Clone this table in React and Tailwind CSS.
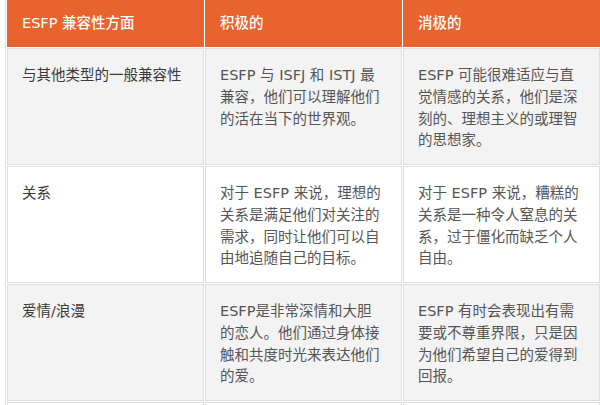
const rows = [
  {
    aspect: '与其他类型的一般兼容性',
    pos: 'ESFP 与 ISFJ 和 ISTJ 最兼容，他们可以理解他们的活在当下的世界观。',
    neg: 'ESFP 可能很难适应与直觉情感的关系，他们是深刻的、理想主义的或理智的思想家。',
  },
  {
    aspect: '关系',
    pos: '对于 ESFP 来说，理想的关系是满足他们对关注的需求，同时让他们可以自由地追随自己的目标。',
    neg: '对于 ESFP 来说，糟糕的关系是一种令人窒息的关系，过于僵化而缺乏个人自由。',
  },
  {
    aspect: '爱情/浪漫',
    pos: 'ESFP是非常深情和大胆的恋人。他们通过身体接触和共度时光来表达他们的爱。',
    neg: 'ESFP 有时会表现出有需要或不尊重界限，只是因为他们希望自己的爱得到回报。',
  },
  { aspect: '\u00a0', pos: '\u00a0', neg: '\u00a0' },
]

export default function App() {
  return (
    <div
      className="h-[405px] w-[600px] overflow-hidden bg-white"
      style={{ fontFamily: '"DejaVu Sans", "Noto Sans CJK SC", sans-serif' }}
    >
      <table className="ml-[5px] -mt-[2px] w-[597px] table-fixed border-separate border-spacing-[1px] border border-[#dedede] text-[14.5px] leading-[21.75px]">
        <colgroup>
          <col className="w-[197px]" />
          <col className="w-[197px]" />
          <col className="w-[197px]" />
        </colgroup>
        <thead>
          <tr className="bg-[#e8632d] text-left text-white">
            <th className="h-[47px] border border-[#e8632d] pl-[14px] pr-[17px] pt-[1px] font-medium">ESFP 兼容性方面</th>
            <th className="border border-[#e8632d] pl-[14px] pr-[17px] pt-[1px] font-medium">积极的</th>
            <th className="border border-[#e8632d] pl-[14px] pr-[17px] pt-[1px] font-medium">消极的</th>
          </tr>
        </thead>
        <tbody>
          {rows.map((r, i) => (
            <tr key={i} className={i % 2 === 0 ? 'bg-[#f3f3f3]' : 'bg-white'}>
              <td className="border border-[#dedede] pl-[14px] pr-[17px] pt-[16px] pb-[12px] align-top text-[#3a3a3a]">{r.aspect}</td>
              <td className="border border-[#dedede] pl-[14px] pr-[17px] pt-[16px] pb-[12px] align-top text-[#555]">{r.pos}</td>
              <td className="border border-[#dedede] pl-[14px] pr-[17px] pt-[16px] pb-[12px] align-top text-[#555]">{r.neg}</td>
            </tr>
          ))}
        </tbody>
      </table>
    </div>
  )
}
